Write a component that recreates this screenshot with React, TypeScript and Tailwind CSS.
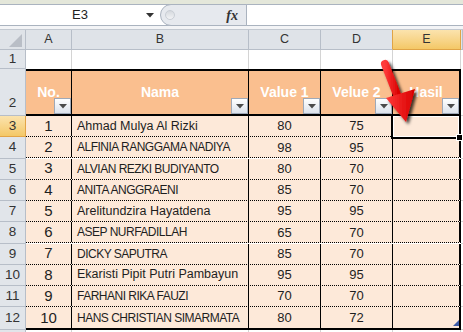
import React from "react";

const rows: [number, string, number, number][] = [
  [1, "Ahmad Mulya Al Rizki", 80, 75],
  [2, "ALFINIA RANGGAMA NADIYA", 98, 95],
  [3, "ALVIAN REZKI BUDIYANTO", 80, 70],
  [4, "ANITA ANGGRAENI", 85, 70],
  [5, "Arelitundzira Hayatdena", 95, 95],
  [6, "ASEP NURFADILLAH", 65, 70],
  [7, "DICKY SAPUTRA", 85, 70],
  [8, "Ekaristi Pipit Putri Pambayun", 95, 95],
  [9, "FARHANI RIKA FAUZI", 70, 70],
  [10, "HANS CHRISTIAN SIMARMATA", 80, 72],
];

const headCell = "shrink-0 flex items-center justify-center border-r border-b border-[#b7bec8] bg-[#dfe3e8] text-[12.5px] text-[#333]";

function RowHead({ label, selected, bottom }: { label: string; selected?: boolean; bottom?: boolean }) {
  return (
    <div
      className={`w-[26px] shrink-0 flex justify-center border-r border-b text-[13.5px] text-[#333] ${
        bottom ? "items-end pb-[2px]" : "items-center"
      } ${selected ? "bg-linear-to-b from-[#fbe3ad] to-[#f4c866] border-[#e3a446]" : "bg-[#e1e5ea] border-[#b7bec8]"}`}
    >
      {label}
    </div>
  );
}

function FilterButton() {
  return (
    <div className="absolute right-0 bottom-0 w-[17px] h-[16px] border border-[#9fa9b8] bg-linear-to-b from-white to-[#dce2eb] flex items-center justify-center">
      <svg width="8" height="5" viewBox="0 0 8 5">
        <polygon points="0,0 8,0 4,4.5" fill="#4b4b4b" />
      </svg>
    </div>
  );
}

function HeaderCell({ w, text, last }: { w: string; text: string; last?: boolean }) {
  return (
    <div className={`relative shrink-0 ${w} ${last ? "border-r-2" : "border-r"} border-black bg-[#fabf8f] flex items-center justify-center`}>
      <span className="text-white font-bold text-[14px]">{text}</span>
      <FilterButton />
    </div>
  );
}

export default function App() {
  return (
    <div className="relative w-[463px] h-[332px] overflow-hidden bg-white font-['Liberation_Sans',Arial,sans-serif]">
      {/* formula bar */}
      <div className="h-[30px] flex flex-col bg-[#e4e7da]">
        <div className="h-[4px]" />
        <div className="h-[22px] flex bg-white border-y border-[#aab3bf]">
          <div className="w-[158px] relative flex items-center justify-center text-[13px] text-[#222]">
            <span className="ml-[2px]">E3</span>
            <svg className="absolute right-[4px] top-[8px]" width="8" height="5" viewBox="0 0 8 5">
              <polygon points="0,0 8,0 4,4.5" fill="#333" />
            </svg>
          </div>
          <div className="w-[2px]" />
          <div className="w-[87px] -my-px flex items-center justify-between pl-[4px] pr-[8px] bg-[#e6e9ee] border border-[#aab3bf] rounded-l-full">
            <div className="w-[10px] h-[10px] rounded-full bg-linear-to-b from-[#d5d9de] to-[#f2f3f5] border border-[#c9ced5]" />
            <span className="font-['Liberation_Serif',serif] italic font-bold text-[14px] text-[#333]">fx</span>
          </div>
          <div className="flex-1 bg-white" />
        </div>
        <div className="h-[4px] bg-[#f3f4f6] border-b border-[#c2c8d0]" />
      </div>

      {/* column letters */}
      <div className="flex h-[20px]">
        <div className="w-[26px] shrink-0 relative border-r border-b border-[#b7bec8] bg-[#dfe3e8]">
          <svg className="absolute left-[9px] top-[4px]" width="13" height="13" viewBox="0 0 13 13">
            <polygon points="13,0 13,13 0,13" fill="#b9bec6" />
          </svg>
        </div>
        <div className={`${headCell} w-[46px]`}>A</div>
        <div className={`${headCell} w-[177px]`}>B</div>
        <div className={`${headCell} w-[72px]`}>C</div>
        <div className={`${headCell} w-[72px] border-r-[#e0a446]`}>D</div>
        <div className="w-[68px] shrink-0 flex items-center justify-center border-r border-b border-[#e0a446] bg-linear-to-b from-[#fbe3ad] to-[#f4c866] text-[12.5px] text-[#333]">
          E
        </div>
        <div className={`${headCell} flex-1`} />
      </div>

      {/* row 1 */}
      <div className="flex h-[19px]">
        <RowHead label="1" />
        <div className="w-[46px] shrink-0 border-r border-[#d4d4d4]" />
        <div className="w-[177px] shrink-0 border-r border-[#d4d4d4]" />
        <div className="w-[72px] shrink-0 border-r border-[#d4d4d4]" />
        <div className="w-[72px] shrink-0 border-r border-[#d4d4d4]" />
        <div className="w-[68px] shrink-0 border-r border-[#d4d4d4]" />
        <div className="flex-1" />
      </div>

      {/* row 2 header */}
      <div className="flex">
        <RowHead label="2" bottom />
        <div className="flex h-[47px] border-y-2 border-black">
          <HeaderCell w="w-[46px]" text="No." />
          <HeaderCell w="w-[177px]" text="Nama" />
          <HeaderCell w="w-[72px]" text="Value 1" />
          <HeaderCell w="w-[72px]" text="Velue 2" />
          <HeaderCell w="w-[68px]" text="Hasil" last />
        </div>
        <div className="flex-1 border-b border-[#d4d4d4]" />
      </div>

      {/* data rows */}
      {rows.map(([no, name, v1, v2], i) => {
        const last = i === rows.length - 1;
        const caps = name === name.toUpperCase();
        return (
          <div key={no} className="flex">
            <RowHead label={String(no + 2)} selected={i === 0} />
            <div
              className={`flex bg-[#fde9d9] text-[#1e1e1e] ${
                last ? "h-[23px] border-b-2 border-solid border-black" : "h-[21px] border-b border-dotted border-black"
              }`}
            >
              <div className="w-[46px] shrink-0 border-r border-black flex items-center justify-center text-[15px]">{no}</div>
              <div
                className={`w-[177px] shrink-0 border-r border-black flex items-center pl-[5px] whitespace-nowrap overflow-hidden ${
                  caps ? "text-[12px] tracking-[-0.5px]" : "text-[12.5px]"
                }`}
              >
                {name}
              </div>
              <div className="w-[72px] shrink-0 border-r border-black flex items-center justify-center text-[13px]">{v1}</div>
              <div className="w-[72px] shrink-0 border-r border-black flex items-center justify-center text-[13px]">{v2}</div>
              <div className="w-[68px] shrink-0 border-r-2 border-black" />
            </div>
            <div className="flex-1 border-b border-[#d4d4d4]" />
          </div>
        );
      })}

      {/* row 13 */}
      <div className="flex h-[12px]">
        <RowHead label="" />
        <div className="w-[46px] shrink-0 border-r border-[#d4d4d4]" />
        <div className="w-[177px] shrink-0 border-r border-[#d4d4d4]" />
        <div className="w-[72px] shrink-0 border-r border-[#d4d4d4]" />
        <div className="w-[72px] shrink-0 border-r border-[#d4d4d4]" />
        <div className="w-[68px] shrink-0 border-r border-[#d4d4d4]" />
        <div className="flex-1" />
      </div>

      {/* active cell E3 */}
      <div className="absolute left-[391px] top-[114px] w-[70px] h-[25px] border-2 border-black">
        <div className="w-full h-full border border-white" />
      </div>
      <div className="absolute left-[456px] top-[134px] w-[7px] h-[7px] bg-black border border-white" />

      {/* red arrow + table resize handle */}
      <svg className="absolute inset-0 pointer-events-none" width="463" height="332" viewBox="0 0 463 332">
        <defs>
          <filter id="sh" x="-50%" y="-50%" width="200%" height="200%">
            <feDropShadow dx="2.5" dy="2.5" stdDeviation="1.6" floodColor="#000" floodOpacity="0.75" />
          </filter>
          <linearGradient id="rg" x1="0" y1="0" x2="1" y2="0">
            <stop offset="0" stopColor="#ff3a3a" />
            <stop offset="1" stopColor="#d80000" />
          </linearGradient>
        </defs>
        <g filter="url(#sh)">
          <line x1="385" y1="64" x2="399" y2="100" stroke="url(#rg)" strokeWidth="8" strokeLinecap="round" />
          <polygon points="386,98 415,89 406,122" fill="url(#rg)" />
        </g>
        <polygon points="453,326 459,326 459,320" fill="#3d5ca8" />
      </svg>
    </div>
  );
}
